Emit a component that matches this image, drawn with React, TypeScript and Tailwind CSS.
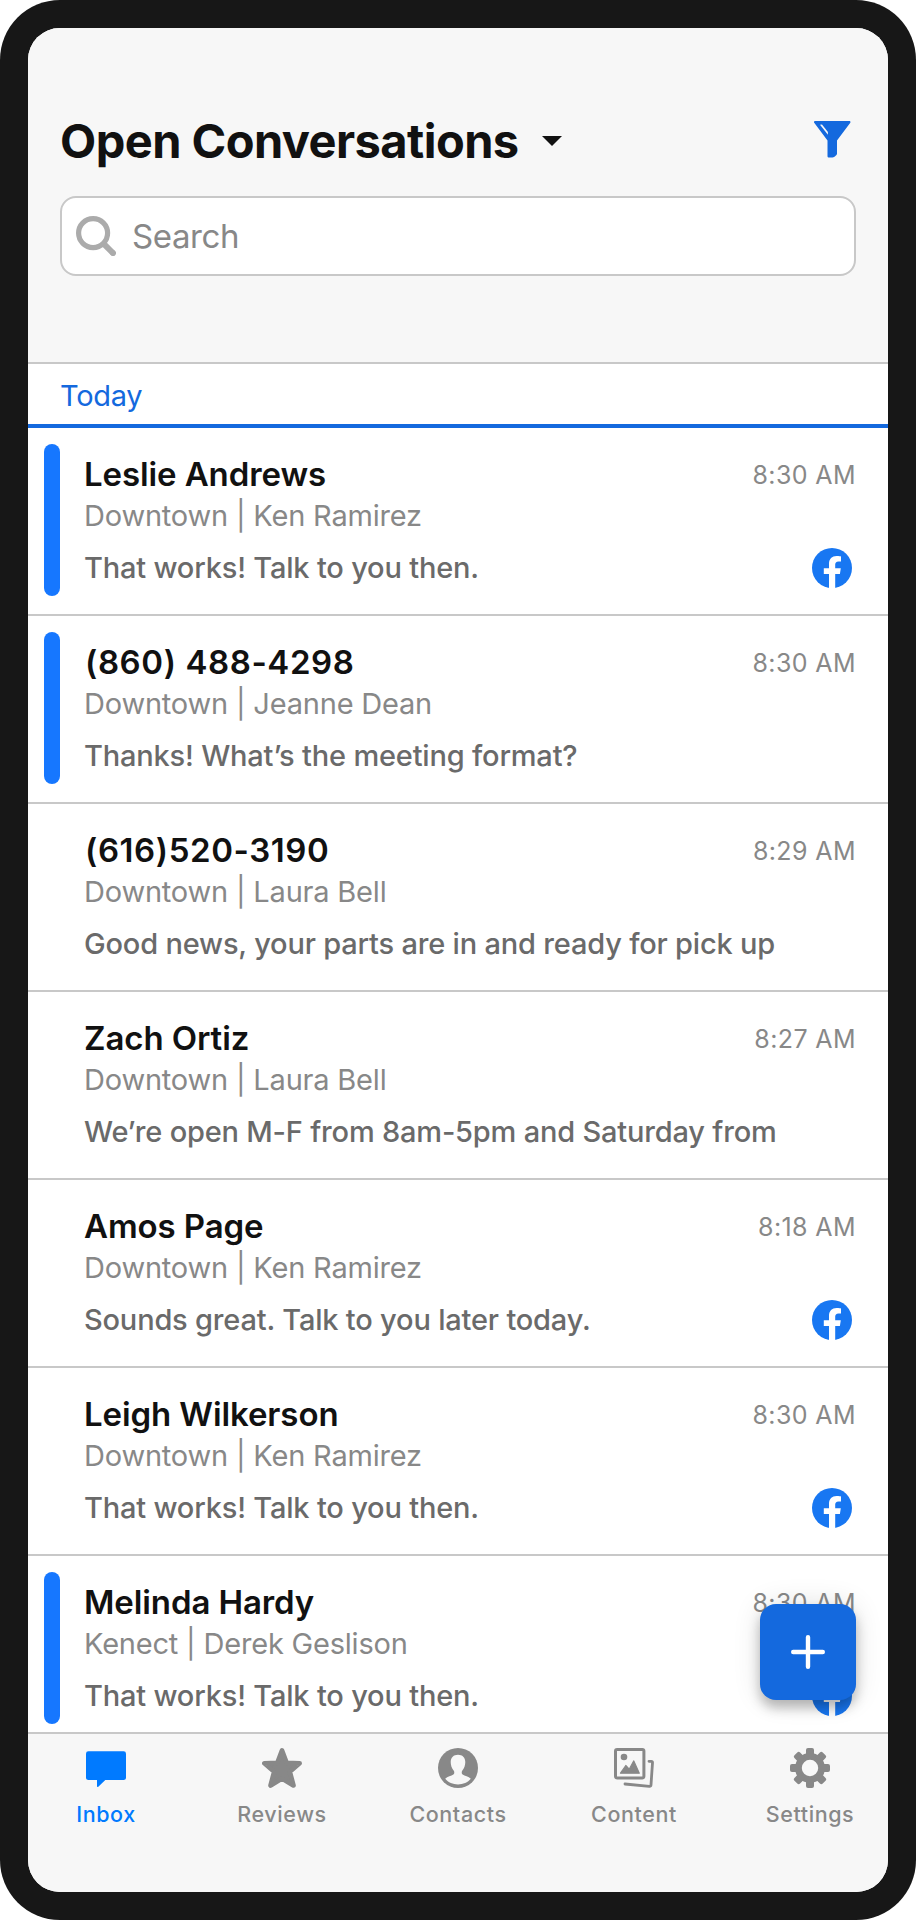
import React from "react";

type ConversationType = {
  id: number;
  name: string;
  isPhone?: boolean;
  info: string;
  message: string;
  time: string;
  unread?: boolean;
  facebook?: boolean;
};

const conversations: ConversationType[] = [
  {
    id: 1,
    name: "Leslie Andrews",
    info: "Downtown | Ken Ramirez",
    message: "That works! Talk to you then.",
    time: "8:30 AM",
    unread: true,
    facebook: true,
  },
  {
    id: 2,
    name: "(860) 488-4298",
    isPhone: true,
    info: "Downtown | Jeanne Dean",
    message: "Thanks! What’s the meeting format?",
    time: "8:30 AM",
    unread: true,
  },
  {
    id: 3,
    name: "(616)520-3190",
    isPhone: true,
    info: "Downtown | Laura Bell",
    message: "Good news, your parts are in and ready for pick up",
    time: "8:29 AM",
  },
  {
    id: 4,
    name: "Zach Ortiz",
    info: "Downtown | Laura Bell",
    message: "We’re open M-F from 8am-5pm and Saturday from",
    time: "8:27 AM",
  },
  {
    id: 5,
    name: "Amos Page",
    info: "Downtown | Ken Ramirez",
    message: "Sounds great. Talk to you later today.",
    time: "8:18 AM",
    facebook: true,
  },
  {
    id: 6,
    name: "Leigh Wilkerson",
    info: "Downtown | Ken Ramirez",
    message: "That works! Talk to you then.",
    time: "8:30 AM",
    facebook: true,
  },
  {
    id: 7,
    name: "Melinda Hardy",
    info: "Kenect | Derek Geslison",
    message: "That works! Talk to you then.",
    time: "8:30 AM",
    unread: true,
    facebook: true,
  },
];

function FilterIcon() {
  return (
    <svg width="37" height="37" viewBox="0 0 37 37">
      <path
        d="M1.4 0h33.7c1.4 0 1.8 1.1 1 2.1L23 19.4v13.1c0 .7-.3 1.2-.8 1.7l-1.4 1.4c-1 .8-1.9 1-3.1 1h-2.6c-1 0-1.6-.7-1.6-1.6V19.4L.4 2.1C-.4 1.1 0 0 1.4 0Z"
        fill="#1469de"
      />
      <path d="m6 3.8 2-.2 5.900 7.400v2.800Z" fill="#f7f7f7" />
    </svg>
  );
}

function SearchIcon() {
  return (
    <svg width="40" height="40" viewBox="0 0 40 40" fill="none" stroke="#ababab">
      <circle cx="17.1" cy="17.1" r="14.5" strokeWidth="5.2" />
      <path d="m28.3 28.4 8.6 8.6" strokeWidth="6" />
      <path d="m36.9 37 .1.1" strokeWidth="6" strokeLinecap="round" />
    </svg>
  );
}

function FacebookIcon() {
  return (
    <svg width="40" height="40" viewBox="0 0 40 40">
      <circle cx="20" cy="20" r="20" fill="#1877f2" />
      <path
        d="M17 40V26.1h-5.2v-5.8H17v-4.4c0-5 3-7.8 7.6-7.8 2.2 0 4.4.4 4.4.4v4.9h-2.5c-2.4 0-3.3 1.5-3.3 3.1v3.8h5.6l-.9 5.8h-4.7V40Z"
        fill="#fff"
      />
    </svg>
  );
}

function InboxIcon() {
  return (
    <svg width="40" height="40" viewBox="0 0 40 40" fill="currentColor">
      <path d="M2.4 3.3h35.2A2.4 2.4 0 0 1 40 5.7v24a2.4 2.4 0 0 1-2.4 2.4H19.3l-7 6.7c-.6.6-1.3.3-1.3-.5v-6.2H2.4A2.4 2.4 0 0 1 0 29.7v-24a2.4 2.4 0 0 1 2.4-2.4Z" />
    </svg>
  );
}

function StarIcon() {
  return (
    <svg width="40" height="40" viewBox="0 0 40 40" fill="currentColor">
      <path
        d="m20 2.5 4.6 12.4 13 .4-9.8 8.5 3.6 13.6L20 30.4 8.6 37.4l3.6-13.6-9.8-8.5 13-.4Z"
        stroke="currentColor"
        strokeWidth="4.8"
        strokeLinejoin="round"
      />
    </svg>
  );
}

function ContactIcon() {
  return (
    <svg width="40" height="40" viewBox="0 0 40 40">
      <circle cx="20" cy="20" r="20" fill="currentColor" />
      <path
        d="M20 6.7c4.4 0 7.3 2.8 7.3 7.3 0 3.1-1 6.4-3.1 8.8-.7 1-.7 3 .4 3.8 2 1.5 6 2 8.2 4.1-3 3.6-7.8 5.7-12.8 5.7S10.2 34.3 7.2 30.7c2.2-2.1 6.2-2.6 8.2-4.1 1.1-.8 1.1-2.8.4-3.8-2.1-2.4-3.1-5.7-3.1-8.8 0-4.5 2.9-7.3 7.3-7.3Z"
        fill="#f7f7f7"
      />
    </svg>
  );
}

function ContentIcon() {
  return (
    <svg width="40" height="40" viewBox="0 0 40 40" fill="none" stroke="currentColor">
      <rect x="1.5" y="1.5" width="28.4" height="28.4" rx="1.6" strokeWidth="3" />
      <circle cx="10" cy="9" r="3.3" fill="currentColor" stroke="none" />
      <path
        d="m6.5 25.2 5.3-7.7 3.4 3.7 4.6-8.3 5.5 12.3Z"
        fill="currentColor"
        strokeWidth="1.2"
        strokeLinejoin="round"
      />
      <path
        d="M35 13.3h2.2q1.4.1 1.3 1.5l-1.5 22q-.1 1.6-1.6 1.5L11 36"
        strokeWidth="2.8"
        strokeLinecap="round"
      />
    </svg>
  );
}

function SettingsIcon() {
  return (
    <svg width="40" height="40" viewBox="0 0 40 40" fill="currentColor">
      <circle cx="20" cy="20" r="11.6" fill="none" stroke="currentColor" strokeWidth="6.8" />
      {[0, 45, 90, 135, 180, 225, 270, 315].map((deg) => (
        <rect key={deg} x="16" y="0" width="8" height="9" rx="2" transform={`rotate(${deg} 20 20)`} />
      ))}
    </svg>
  );
}

const tabs = [
  { label: "Inbox", icon: <InboxIcon />, active: true },
  { label: "Reviews", icon: <StarIcon /> },
  { label: "Contacts", icon: <ContactIcon /> },
  { label: "Content", icon: <ContentIcon /> },
  { label: "Settings", icon: <SettingsIcon /> },
];

function ConversationRow({ item }: { item: ConversationType }) {
  return (
    <li className="flex h-[188px] shrink-0 border-b-2 border-[#c8c8c8] pl-4">
      <div className={`mt-4 h-[152px] w-4 shrink-0 rounded-full ${item.unread ? "bg-[#1677ff]" : ""}`} />
      <div className="mt-[26px] ml-6 min-w-0 flex-1 whitespace-nowrap">
        <h2
          className={`text-[33px] leading-[40px] font-semibold text-[#111] ${
            item.isPhone ? "pl-px tracking-[0.58px]" : "tracking-[-0.1px]"
          }`}
        >
          {item.name}
        </h2>
        <p className="text-[29px] leading-[43px] tracking-[-0.2px] text-[#888]">{item.info}</p>
        <p className="mt-2.5 text-[29px] leading-[41px] font-medium tracking-[-0.19px] text-[#6a6a6a]">
          {item.message}
        </p>
      </div>
      <div className="flex w-[140px] shrink-0 flex-col items-end pt-[27px] pr-8">
        <time className="text-[25px] leading-[40px] tracking-[0.4px] whitespace-nowrap text-[#888]">{item.time}</time>
        {item.facebook && (
          <div className="mt-[52.5px] mr-1">
            <FacebookIcon />
          </div>
        )}
      </div>
    </li>
  );
}

export default function App() {
  return (
    <div className="h-[1920px] w-[916px] rounded-[60px] bg-[#171717] p-7 font-['Inter','Liberation_Sans',sans-serif]">
      <div className="relative flex h-full flex-col overflow-hidden rounded-[32px] bg-white">
        <header className="h-[336px] shrink-0 border-b-2 border-[#c8c8c8] bg-[#f7f7f7] px-8 pt-[83px]">
          <div className="flex h-[60px] items-center">
            <h1 className="text-[47px] leading-[60px] font-bold tracking-[-0.56px] whitespace-nowrap text-[#111]">
              Open Conversations
            </h1>
            <svg className="ml-[23px]" width="20" height="10" viewBox="0 0 20 10">
              <path d="M0 0h20L10 10Z" fill="#111" />
            </svg>
            <div className="mr-[5px] mb-[3px] ml-auto">
              <FilterIcon />
            </div>
          </div>
          <div className="mt-[25px] flex h-20 items-center rounded-2xl border-2 border-[#c8c8c8] bg-white pl-3.5">
            <SearchIcon />
            <span className="ml-4 text-[33px] leading-[40px] tracking-[-0.4px] text-[#888]">Search</span>
          </div>
        </header>

        <div className="h-16 shrink-0 border-b-4 border-[#1469de] pt-px pl-8">
          <p className="text-[29px] leading-[61px] tracking-[-0.3px] text-[#1469de]">Today</p>
        </div>

        <ul className="flex min-h-0 flex-1 flex-col overflow-hidden">
          {conversations.map((item) => (
            <ConversationRow key={item.id} item={item} />
          ))}
        </ul>

        <button className="absolute right-8 bottom-48 flex h-24 w-24 items-center justify-center rounded-2xl bg-[#1469de] shadow-[0_8px_12px_rgba(0,0,0,0.25),0_0_28px_rgba(0,0,0,0.12)]">
          <svg width="34" height="34" viewBox="0 0 34 34" stroke="#fff" strokeWidth="4.4" strokeLinecap="round">
            <path d="M17 2.2v29.6M2.200 17h29.600" />
          </svg>
        </button>

        <nav className="relative flex h-40 shrink-0 justify-between border-t-2 border-[#c8c8c8] bg-[#f7f7f7] px-5 pt-3.5">
          {tabs.map((tab) => (
            <div
              key={tab.label}
              className={`flex w-[116px] flex-col items-center ${tab.active ? "text-[#007aff]" : "text-[#888]"}`}
            >
              {tab.icon}
              <span className="mt-[13px] text-[21.5px] leading-[26px] font-medium tracking-[0.6px]">{tab.label}</span>
            </div>
          ))}
        </nav>
      </div>
    </div>
  );
}
